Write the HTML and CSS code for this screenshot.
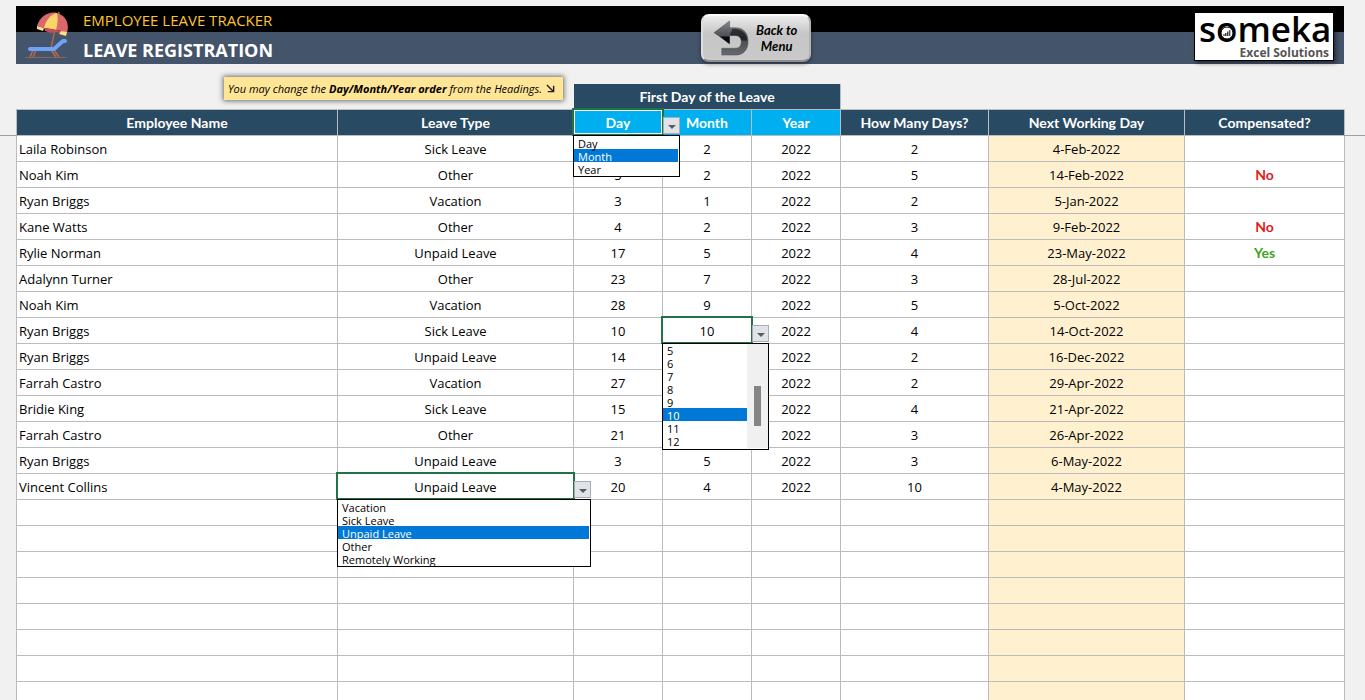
FILE: index.html
```
<!DOCTYPE html>
<html lang="en">
<head>
    <title>Employee Leave Tracker</title>
    <meta charset="UTF-8">
    <link rel="stylesheet" href="styles.css">
</head>
<body>
    <div class="sheet">
        <header class="top">
            <svg class="top_icon" viewBox="0 0 44 48">
                <path d="M34 2L26 38" stroke="#b5694a" stroke-width="1.4" fill="none"/>
                <path d="M12 16C15 6 24 1 32 3C40 5 45 13 42 23L36 21L27 19L19 18Z" fill="#d9676c"/>
                <path d="M32 3C26 4 21 10 19 18L27 19L31 20C33 13 33 7 32 3Z" fill="#fbd666"/>
                <path d="M12 16L19 18L18 21L12 19Z" fill="#fbe08a"/>
                <path d="M19 18L27 19L36 21L35 23L31 22L26 23L20 21Z" fill="#c24f58"/>
                <path d="M36 21L42 22L41 26L34 24Z" fill="#fbe08a"/>
                <path d="M8 40L5 47M11 40L8 47M29 40L34 47M26 40L31 47" stroke="#b5694a" stroke-width="1.6"/>
                <path d="M0 47.500H42" stroke="#8a6658" stroke-width="1"/>
                <path d="M5 39H29L38 31H40" stroke="#6ea3f5" stroke-width="4" stroke-linecap="round" stroke-linejoin="round" fill="none"/>
            </svg>
            <div class="top_text">
                <div class="top_name">EMPLOYEE LEAVE TRACKER</div>
                <h1>LEAVE REGISTRATION</h1>
            </div>
            <button class="back" type="button">
                <svg viewBox="0 0 38 40">
                    <defs>
                        <linearGradient id="arrow" x1="0" y1="0" x2="0" y2="1">
                            <stop offset="0" stop-color="#85888c"/>
                            <stop offset="0.5" stop-color="#45484c"/>
                            <stop offset="1" stop-color="#66696d"/>
                        </linearGradient>
                    </defs>
                    <path d="M1 14L17 2V9H23C32 9 36 15 36 23C36 32 31 37 23 37H9V30H22C27 30 29 28 29 23C29 19 27 17 22 17H17V25Z" fill="url(#arrow)" stroke="#4b4e52" stroke-width="0.5"/>
                    <path d="M7 18L17 18V26Z" fill="#0a0a0a"/>
                    <path d="M17 17L20 10Q34 10 35 22L29 22Q28 17 22 17Z" fill="#0c0c0e" opacity="0.6"/>
                </svg>
                <span>Back to<br>Menu</span>
            </button>
            <div class="logo">
                <div class="logo_name">s<span class="logo_o">o<svg viewBox="0 0 12 12"><circle cx="6" cy="6" r="6" fill="#fff" stroke="#000" stroke-width="1"/><path d="M2.500 7h1v2h-1zM4.200 6h1.200v3h-1.200zM6.200 4.500h1.200v4.500h-1.200zM8.300 3h1v6h-1z" fill="#111"/></svg></span>meka</div>
                <div class="logo_sub">Excel Solutions</div>
            </div>
        </header>

        <table>
            <colgroup>
                <col class="c_name">
                <col class="c_type">
                <col class="c_date">
                <col class="c_date">
                <col class="c_date">
                <col class="c_days">
                <col class="c_next">
                <col class="c_comp">
            </colgroup>
            <thead>
                <tr class="group">
                    <td colspan="2">
                        <div class="note">
                            <span>You may change the <b>Day/Month/Year order</b> from the Headings.</span>
                            <svg viewBox="0 0 10 10"><path d="M1 1L8 8M8.500 2V8.500H2" fill="none" stroke="#222" stroke-width="1.6"/></svg>
                        </div>
                    </td>
                    <th colspan="3">First Day of the Leave</th>
                    <td colspan="3"></td>
                </tr>
                <tr class="heads">
                    <th>Employee Name</th>
                    <th>Leave Type</th>
                    <th class="blue active">Day
                        <button class="drop" type="button" aria-label="Open date part list"></button>
                        <select class="list" size="3" aria-label="Date part">
                            <option>Day</option>
                            <option selected>Month</option>
                            <option>Year</option>
                        </select>
                    </th>
                    <th class="blue">Month</th>
                    <th class="blue">Year</th>
                    <th>How Many Days?</th>
                    <th>Next Working Day</th>
                    <th>Compensated?</th>
                </tr>
            </thead>
            <tbody>
                <tr><td>Laila Robinson</td><td>Sick Leave</td><td></td><td>2</td><td>2022</td><td>2</td><td>4-Feb-2022</td><td></td></tr>
                <tr><td>Noah Kim</td><td>Other</td><td>5</td><td>2</td><td>2022</td><td>5</td><td>14-Feb-2022</td><td class="no">No</td></tr>
                <tr><td>Ryan Briggs</td><td>Vacation</td><td>3</td><td>1</td><td>2022</td><td>2</td><td>5-Jan-2022</td><td></td></tr>
                <tr><td>Kane Watts</td><td>Other</td><td>4</td><td>2</td><td>2022</td><td>3</td><td>9-Feb-2022</td><td class="no">No</td></tr>
                <tr><td>Rylie Norman</td><td>Unpaid Leave</td><td>17</td><td>5</td><td>2022</td><td>4</td><td>23-May-2022</td><td class="yes">Yes</td></tr>
                <tr><td>Adalynn Turner</td><td>Other</td><td>23</td><td>7</td><td>2022</td><td>3</td><td>28-Jul-2022</td><td></td></tr>
                <tr><td>Noah Kim</td><td>Vacation</td><td>28</td><td>9</td><td>2022</td><td>5</td><td>5-Oct-2022</td><td></td></tr>
                <tr>
                    <td>Ryan Briggs</td><td>Sick Leave</td><td>10</td>
                    <td class="active">10
                        <button class="drop" type="button" aria-label="Open month list"></button>
                        <select class="list scroll" id="months" size="8" aria-label="Month">
                            <option>1</option>
                            <option>2</option>
                            <option>3</option>
                            <option>4</option>
                            <option>5</option>
                            <option>6</option>
                            <option>7</option>
                            <option>8</option>
                            <option>9</option>
                            <option selected>10</option>
                            <option>11</option>
                            <option>12</option>
                        </select>
                        <span class="bar"></span>
                    </td>
                    <td>2022</td><td>4</td><td>14-Oct-2022</td><td></td>
                </tr>
                <tr><td>Ryan Briggs</td><td>Unpaid Leave</td><td>14</td><td></td><td>2022</td><td>2</td><td>16-Dec-2022</td><td></td></tr>
                <tr><td>Farrah Castro</td><td>Vacation</td><td>27</td><td></td><td>2022</td><td>2</td><td>29-Apr-2022</td><td></td></tr>
                <tr><td>Bridie King</td><td>Sick Leave</td><td>15</td><td></td><td>2022</td><td>4</td><td>21-Apr-2022</td><td></td></tr>
                <tr><td>Farrah Castro</td><td>Other</td><td>21</td><td></td><td>2022</td><td>3</td><td>26-Apr-2022</td><td></td></tr>
                <tr><td>Ryan Briggs</td><td>Unpaid Leave</td><td>3</td><td>5</td><td>2022</td><td>3</td><td>6-May-2022</td><td></td></tr>
                <tr>
                    <td>Vincent Collins</td>
                    <td class="active">Unpaid Leave
                        <button class="drop" type="button" aria-label="Open leave type list"></button>
                        <select class="list" size="5" aria-label="Leave type">
                            <option>Vacation</option>
                            <option>Sick Leave</option>
                            <option selected>Unpaid Leave</option>
                            <option>Other</option>
                            <option>Remotely Working</option>
                        </select>
                    </td>
                    <td>20</td><td>4</td><td>2022</td><td>10</td><td>4-May-2022</td><td></td>
                </tr>
                <tr><td></td><td></td><td></td><td></td><td></td><td></td><td></td><td></td></tr>
                <tr><td></td><td></td><td></td><td></td><td></td><td></td><td></td><td></td></tr>
                <tr><td></td><td></td><td></td><td></td><td></td><td></td><td></td><td></td></tr>
                <tr><td></td><td></td><td></td><td></td><td></td><td></td><td></td><td></td></tr>
                <tr><td></td><td></td><td></td><td></td><td></td><td></td><td></td><td></td></tr>
                <tr><td></td><td></td><td></td><td></td><td></td><td></td><td></td><td></td></tr>
                <tr><td></td><td></td><td></td><td></td><td></td><td></td><td></td><td></td></tr>
                <tr><td></td><td></td><td></td><td></td><td></td><td></td><td></td><td></td></tr>
            </tbody>
        </table>
    </div>
    <script>
        var months = document.getElementById("months");
        months.scrollTop = months.scrollHeight;
    </script>
</body>
</html>
```

FILE: styles.css
```
*{
    box-sizing: border-box;
}
body{
    margin: 0;
    background-color: #f1f1f1;
    font: 13px/18px "Open Sans", "Noto Sans", sans-serif;
    color: #000;
}
.sheet{
    height: 100vh;
    padding: 6px 20px 0 16px;
    overflow: hidden;
}

/* title bar */
.top{
    display: grid;
    grid-template-columns: 1fr auto 1fr;
    align-items: center;
    position: relative;
    height: 58px;
    margin: 0 1px 20px 0;
    padding: 2px 10px 0 67px;
    background: linear-gradient(#000 26px, #44546a 26px);
}
.top_icon{
    position: absolute;
    left: 9px;
    top: 4px;
    width: 44px;
    height: 48px;
}
.top_name{
    font-size: 15px;
    line-height: 24px;
    color: #fdc52c;
}
.top h1{
    margin: 0;
    font-size: 18px;
    line-height: 36px;
    color: #fff;
}
.back{
    display: flex;
    align-items: center;
    gap: 6px;
    width: 110px;
    height: 48px;
    margin-left: 95px;
    padding: 0 10px;
    border: 2px solid;
    border-color: #fafafa #b4b4b4 #8e8e8e #dedede;
    border-radius: 8px;
    background: linear-gradient(#ececec, #c6c6c6 40%, #c9c9c9);
    box-shadow: 0 2px 4px rgba(0,0,0,0.4);
    font: italic bold 13px/16px Lato, sans-serif;
    color: #000;
}
.back svg{
    flex: none;
    width: 37px;
    height: 39px;
}
.back span{
    flex: none;
}
.logo{
    justify-self: end;
    width: 140px;
    height: 49px;
    margin-bottom: 4px;
    padding: 0 4px;
    border: 1px solid #000;
    background-color: #fff;
    box-shadow: 2px 2px 4px rgba(0,0,0,0.5);
    text-align: right;
}
.logo_name{
    font-size: 35px;
    font-weight: 600;
    line-height: 32px;
    color: #000;
}
.logo_o{
    position: relative;
}
.logo_o svg{
    position: absolute;
    left: 5px;
    bottom: 13px;
    width: 12px;
    height: 12px;
}
.logo_sub{
    font-size: 12px;
    font-weight: bold;
    line-height: 15px;
    color: #555;
}

/* grid */
table{
    width: 100%;
    table-layout: fixed;
    border-collapse: separate;
    border-spacing: 0;
}
.c_name{ width: 322px; }
.c_type{ width: 236px; }
.c_date{ width: 89px; }
.c_days{ width: 148px; }
.c_next{ width: 196px; }
.c_comp{ width: 160px; }
th,td{
    position: relative;
    height: 26px;
    padding: 0;
    border-right: 1px solid #bcbcbc;
    border-bottom: 1px solid #bcbcbc;
    text-align: center;
}
th{
    background-color: #284a62;
    font: bold 14px/18px Lato, sans-serif;
    color: #fff;
}
.group td{
    border-right-color: transparent;
}
.heads th:first-child,
tbody td:first-child{
    border-left: 1px solid #bcbcbc;
}
.heads .blue{
    background-color: #00aff0;
}
/* freeze line on both sides of the grid */
.heads th:first-child::before,
.heads th:last-child::after{
    content: "";
    position: absolute;
    bottom: -1px;
    width: 100px;
    height: 1px;
    background-color: #a0a0a0;
}
.heads th:first-child::before{
    right: 100%;
}
.heads th:last-child::after{
    left: 100%;
}
tbody td{
    background-color: #fff;
}
tbody td:first-child{
    padding-left: 2px;
    text-align: left;
}
tbody td:nth-child(7){
    background-color: #fff1cf;
}
tbody .no,
tbody .yes{
    font: bold 14px/18px Lato, sans-serif;
}
tbody .no{
    color: #e01b1b;
}
tbody .yes{
    color: #3fa31c;
}

.note{
    display: flex;
    align-items: center;
    gap: 4px;
    position: absolute;
    right: 10px;
    bottom: 9px;
    height: 23px;
    padding: 0 8px 0 4px;
    background-color: #ffe596;
    box-shadow: 0 0 5px 1px rgba(0,0,0,0.55);
    font-size: 11px;
    font-style: italic;
    white-space: nowrap;
}
.note svg{
    width: 9px;
    height: 9px;
}

/* selected cell with its open list */
.active{
    z-index: 1;
}
.active::before{
    content: "";
    position: absolute;
    inset: -2px -2px -1px -2px;
    border: 2px solid #217346;
    pointer-events: none;
}
th.active::before{
    box-shadow: inset 0 0 0 1px #fff;
}
.drop{
    position: absolute;
    left: 100%;
    bottom: 1px;
    z-index: 1;
    width: 17px;
    height: 17px;
    margin-left: 1px;
    padding: 0;
    border: 1px solid #a9abb0;
    background-color: #dfe3ea;
}
.drop::before{
    content: "";
    display: block;
    width: 0;
    margin: 2px auto 0;
    border: 4px solid transparent;
    border-top-color: #5c5c5c;
    border-bottom: none;
}
.list{
    position: absolute;
    left: -1px;
    top: 100%;
    z-index: 2;
    width: calc(100% + 19px);
    padding: 0 1px 1px 0;
    border: 1px solid #000;
    border-radius: 0;
    outline: none;
    background-color: #fff;
    font: 11px/13px "Open Sans", "Noto Sans", sans-serif;
    color: #000;
    overflow: hidden;
}
.list option{
    height: 13px;
    min-height: 13px;
    padding: 0 4px;
    line-height: 13px;
}
.list option:checked{
    background: #0078d7;
    color: #fff;
}
.scroll{
    padding: 1px 0 0;
    overflow-y: scroll;
    scrollbar-width: none;
}
.bar{
    position: absolute;
    right: -17px;
    top: calc(100% + 1px);
    z-index: 3;
    width: 21px;
    height: 104px;
    padding: 42px 7px 0;
    background-color: #f0f0f0;
    pointer-events: none;
}
.bar::before{
    content: "";
    display: block;
    height: 40px;
    background-color: #858585;
}
```
